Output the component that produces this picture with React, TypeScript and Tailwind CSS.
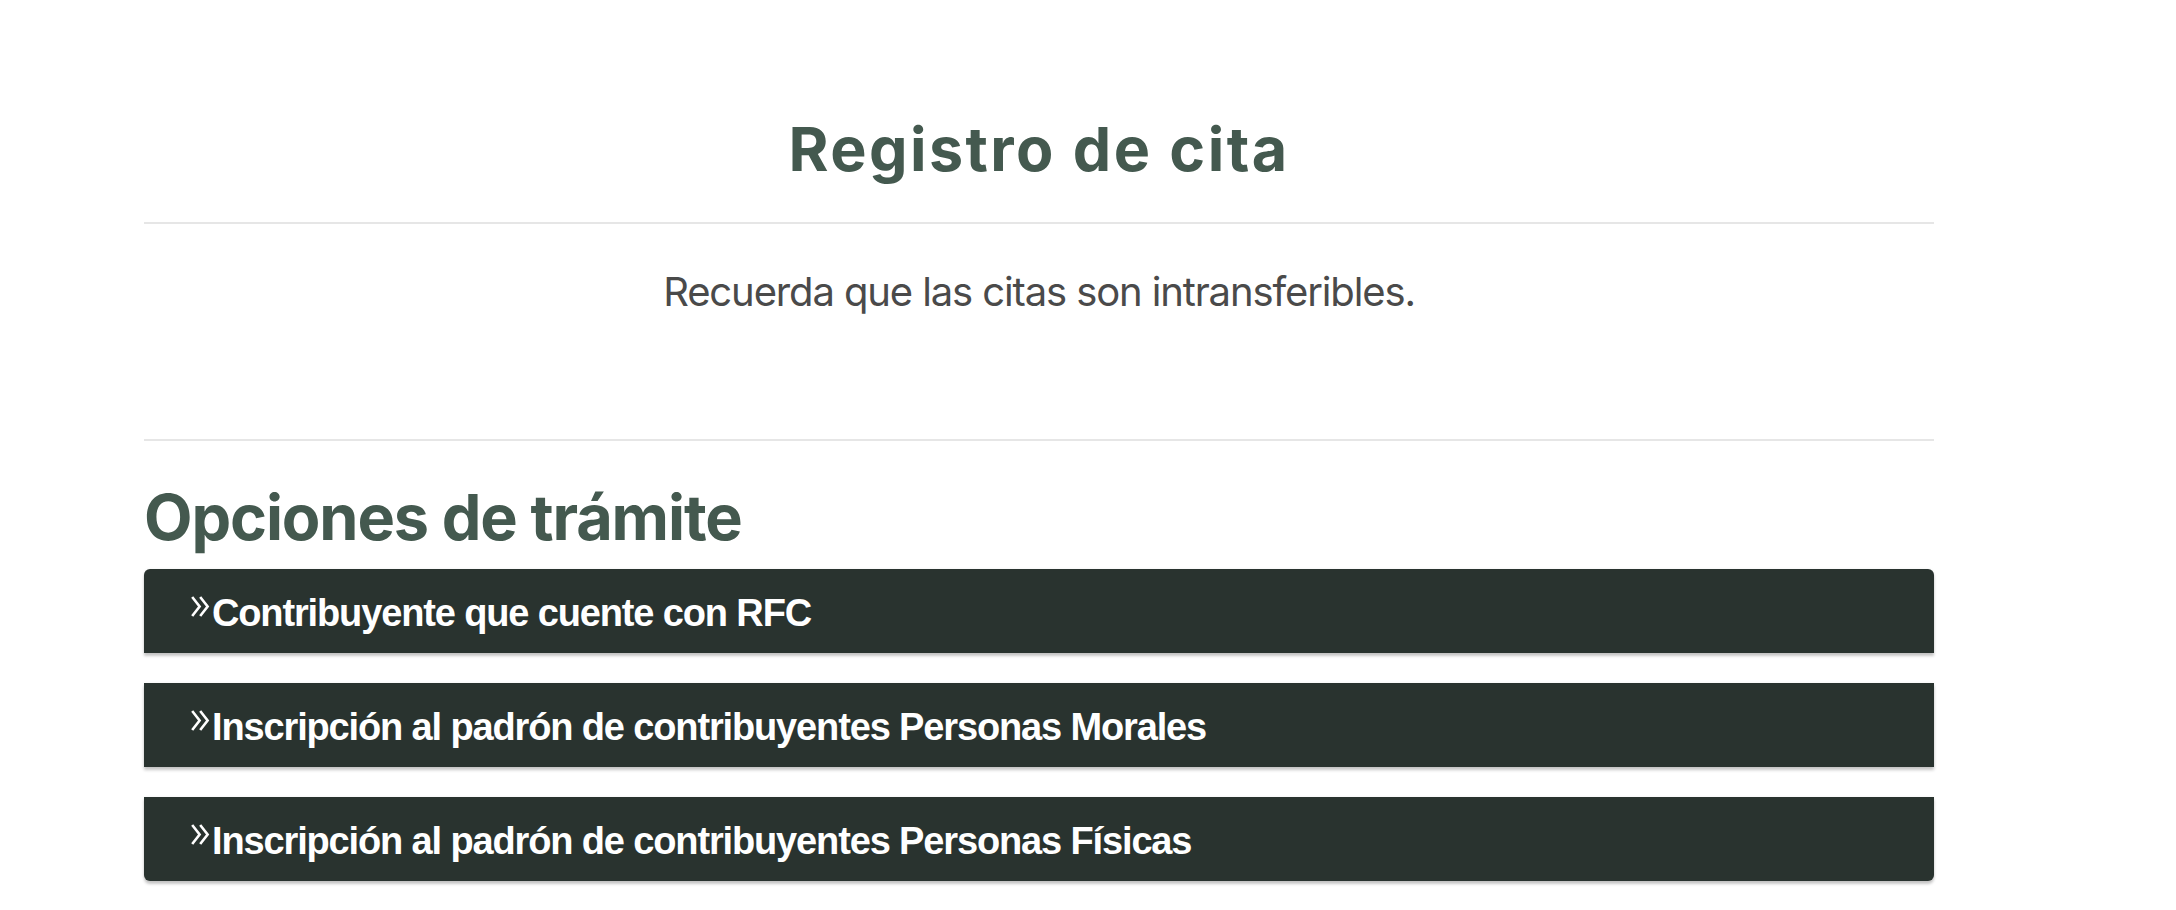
const headingFont = { fontFamily: "Inter, 'Noto Sans', sans-serif" };

const tramites = [
  "Contribuyente que cuente con RFC",
  "Inscripción al padrón de contribuyentes Personas Morales",
  "Inscripción al padrón de contribuyentes Personas Físicas",
];

function DoubleChevron() {
  return (
    <svg
      width="19"
      height="21"
      viewBox="0 0 19 21"
      fill="none"
      stroke="white"
      strokeWidth="2.6"
      className="mt-[2px] shrink-0"
    >
      <path d="M1.2 1 L8.6 10.5 L1.2 20" />
      <path d="M9.2 1 L16.6 10.5 L9.2 20" />
    </svg>
  );
}

export default function App() {
  return (
    <div className="min-h-screen bg-white">
      <main className="ml-[144px] w-[1790px] pt-[119px]">
        <h1
          className="text-center text-[61px] leading-none font-bold text-[#44594f] tracking-[0.04em]"
          style={headingFont}
        >
          Registro de cita
        </h1>

        <div className="mt-[42px] h-[2px] bg-[#e6e6e6]" />

        <p
          className="mt-[48px] text-center text-[40px] leading-none text-[#4a4a4a] tracking-[-0.028em]"
          style={headingFont}
        >
          Recuerda que las citas son intransferibles.
        </p>

        <div className="mt-[127px] h-[2px] bg-[#e6e6e6]" />

        {/* Opciones */}
        <h2
          className="mt-[45px] text-[63px] leading-none font-bold text-[#44594f] tracking-[-0.018em]"
          style={headingFont}
        >
          Opciones de trámite
        </h2>

        <div className="mt-[20px] flex flex-col gap-[30px]">
          {tramites.map((t, i) => (
            <button
              key={t}
              className={
                "flex h-[84px] w-full items-start gap-[2px] bg-[#29332f] pl-[47px] pt-[25px] text-left shadow-[0_3px_3px_rgba(0,0,0,0.22),0_0_3px_rgba(0,0,0,0.06)] " +
                (i === 0 ? "rounded-t-[6px]" : "") +
                (i === tramites.length - 1 ? "rounded-b-[6px]" : "")
              }
            >
              <DoubleChevron />
              <span
                className="text-[38px] leading-none font-bold text-white tracking-[-0.03em]"
                style={{ fontFamily: "'Liberation Sans', Arial, sans-serif" }}
              >
                {t}
              </span>
            </button>
          ))}
        </div>
      </main>
    </div>
  );
}
